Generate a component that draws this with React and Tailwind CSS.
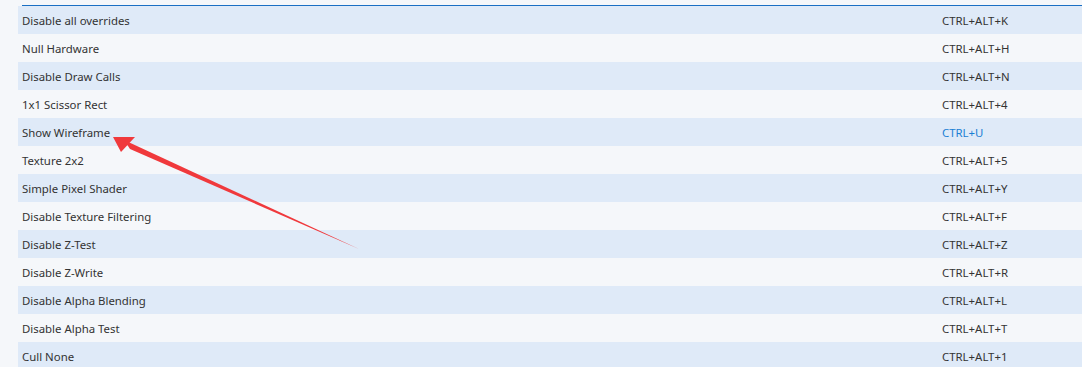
import React from "react";

const rows = [
  ["Disable all overrides", "CTRL+ALT+K"],
  ["Null Hardware", "CTRL+ALT+H"],
  ["Disable Draw Calls", "CTRL+ALT+N"],
  ["1x1 Scissor Rect", "CTRL+ALT+4"],
  ["Show Wireframe", "CTRL+U", true],
  ["Texture 2x2", "CTRL+ALT+5"],
  ["Simple Pixel Shader", "CTRL+ALT+Y"],
  ["Disable Texture Filtering", "CTRL+ALT+F"],
  ["Disable Z-Test", "CTRL+ALT+Z"],
  ["Disable Z-Write", "CTRL+ALT+R"],
  ["Disable Alpha Blending", "CTRL+ALT+L"],
  ["Disable Alpha Test", "CTRL+ALT+T"],
  ["Cull None", "CTRL+ALT+1"],
];

export default function App() {
  return (
    <div
      className="relative w-[1082px] h-[367px] overflow-hidden bg-[#f5f7fa] text-[11.4px] text-[#333333]"
      style={{ fontFamily: '"Noto Sans", "Open Sans", sans-serif' }}
    >
      <div className="ml-[22px] mt-[5px] h-px bg-[#1a6fc4]" />
      <div className="ml-[18px] flex flex-col">
        {rows.map(([name, key, hi], i) => (
          <div
            key={name}
            className={`flex h-[28px] items-center pt-[2px] ${i % 2 === 0 ? "bg-[#dfeaf8]" : "bg-[#f5f7fa]"}`}
          >
            <div className="pl-[4px] w-[924px]">{name}</div>
            <div className={hi ? "text-[#1a7fd4]" : ""}>{key}</div>
          </div>
        ))}
      </div>
      <svg
        className="absolute left-0 top-0 pointer-events-none"
        width="1082"
        height="367"
      >
        <polygon points="113,137 121,152 135,137" fill="#f0393c" />
        <polygon points="124,140 130,149 359,249" fill="#f0393c" />
      </svg>
    </div>
  );
}
